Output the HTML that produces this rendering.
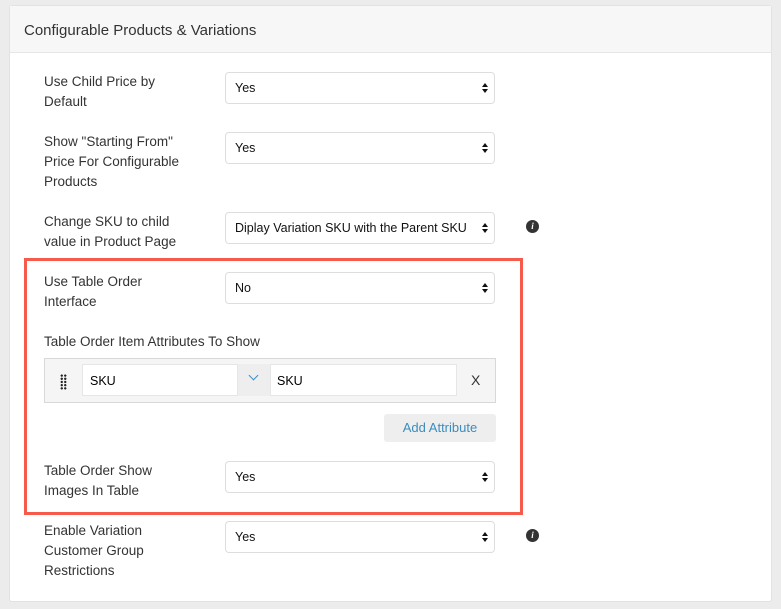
<!DOCTYPE html>
<html><head><style>
*{box-sizing:border-box;margin:0;padding:0}
body{width:781px;height:609px;background:#ececec;font-family:"Liberation Sans",sans-serif;position:relative;overflow:hidden}
.panel{position:absolute;left:9px;top:5px;width:763px;height:597px;background:#fff;border:1px solid #e2e2e2;border-radius:3px}
.hdr{position:absolute;left:0;top:0;right:0;height:47px;background:#f7f7f7;border-bottom:1px solid #e6e6e6;font-size:15px;color:#333;padding:16px 0 0 14px}
.lbl{position:absolute;left:44px;font-size:13.5px;line-height:20px;color:#333}
.sel{position:absolute;left:225px;width:270px;height:32px;border:1px solid #ddd;border-radius:4px;font-size:12.5px;color:#111;padding:8px 0 0 9px}
.sel:after{content:"";position:absolute;right:6px;top:10px;width:0;height:0;border:3px solid transparent;border-bottom:4px solid #111;border-top:0}
.sel:before{content:"";position:absolute;right:6px;top:16px;width:0;height:0;border:3px solid transparent;border-top:4px solid #111;border-bottom:0}
.info{position:absolute;left:526px;width:13px;height:13px;border-radius:50%;background:#333;color:#fff;font:italic bold 9px "Liberation Serif",serif;text-align:center;line-height:13px}
.red{position:absolute;left:24px;top:258px;width:499px;height:257px;border:3px solid #f65a4b}
</style></head><body>
<div class="panel"><div class="hdr">Configurable Products &amp; Variations</div></div>
<div class="lbl" style="top:72px">Use Child Price by<br>Default</div>
<div class="sel" style="top:72px">Yes</div>
<div class="lbl" style="top:132px">Show "Starting From"<br>Price For Configurable<br>Products</div>
<div class="sel" style="top:132px">Yes</div>
<div class="lbl" style="top:212px">Change SKU to child<br>value in Product Page</div>
<div class="sel" style="top:212px">Diplay Variation SKU with the Parent SKU</div>
<div class="info" style="top:220px">i</div>
<div class="red"></div>
<div class="lbl" style="top:272px">Use Table Order<br>Interface</div>
<div class="sel" style="top:272px">No</div>
<div class="lbl" style="top:332px">Table Order Item Attributes To Show</div>
<div style="position:absolute;left:44px;top:358px;width:452px;height:45px;background:#f5f5f5;border:1px solid #d8d8d8"></div>
<div style="position:absolute;left:60px;top:374px;width:7px;height:16px;background:radial-gradient(circle,#222 1px,transparent 1.3px) 0 0/3.5px 3.2px"></div>
<div style="position:absolute;left:82px;top:364px;width:156px;height:32px;background:#fff;border:1px solid #e6e6e6;font-size:12.5px;padding:9px 0 0 7px">SKU</div>
<div style="position:absolute;left:238px;top:364px;width:32px;height:32px;background:#eee"><div style="position:absolute;left:12px;top:8px;width:7px;height:7px;border-right:1.5px solid #3a90c8;border-bottom:1.5px solid #3a90c8;transform:rotate(45deg)"></div></div>
<div style="position:absolute;left:270px;top:364px;width:187px;height:32px;background:#fff;border:1px solid #e6e6e6;font-size:12.5px;padding:9px 0 0 6px">SKU</div>
<div style="position:absolute;left:471px;top:372px;font-size:14px;color:#333">X</div>
<div style="position:absolute;left:384px;top:414px;width:112px;height:28px;background:#eee;border-radius:3px;color:#3b8dbd;font-size:13px;text-align:center;line-height:28px">Add Attribute</div>
<div class="lbl" style="top:461px">Table Order Show<br>Images In Table</div>
<div class="sel" style="top:461px">Yes</div>
<div class="lbl" style="top:521px">Enable Variation<br>Customer Group<br>Restrictions</div>
<div class="sel" style="top:521px">Yes</div>
<div class="info" style="top:529px">i</div>
</body></html>
